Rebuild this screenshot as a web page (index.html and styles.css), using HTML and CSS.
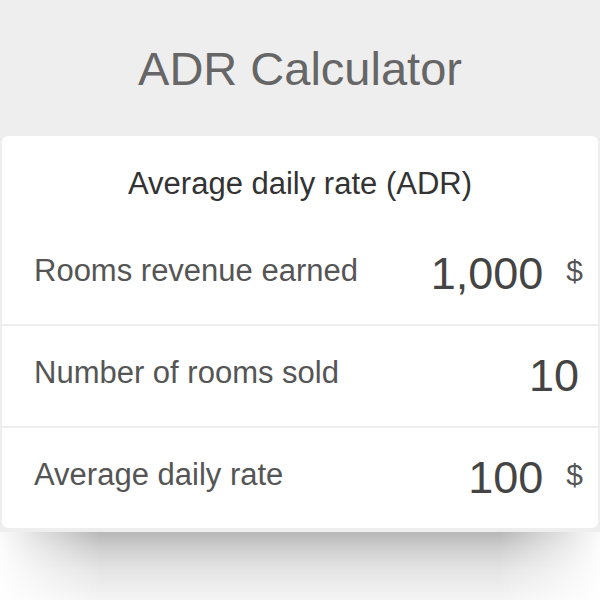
FILE: index.html
```html
<!DOCTYPE html>
<html lang="en">

<head>
    <meta charset="UTF-8" />
    <meta name="viewport" content="width=device-width, initial-scale=1.0" />
    <title>ADR Calculator</title>
    <link rel="stylesheet" href="styles.css">
</head>

<body>
    <div class="calc">
        <header class="calc-head">
            <h1>ADR Calculator</h1>
        </header>
        <div class="card">
            <h2 class="section">Average daily rate (ADR)</h2>
            <div class="row">
                <span class="label">Rooms revenue earned</span>
                <span class="value">1,000</span>
                <span class="unit">$</span>
            </div>
            <div class="row">
                <span class="label">Number of rooms sold</span>
                <span class="value solo">10</span>
            </div>
            <div class="row">
                <span class="label">Average daily rate</span>
                <span class="value">100</span>
                <span class="unit">$</span>
            </div>
        </div>
    </div>
    <div class="calc-shadow"></div>
</body>

</html>
```

FILE: styles.css
```css
/* reset */
* {
    margin: 0;
    padding: 0;
    box-sizing: border-box;
}

body {
    font-family: "Liberation Sans", Arial, Helvetica, sans-serif;
    background: #fff;
}

/* grey frame around the calculator */
.calc {
    background: #eee;
    padding: 0 2px 4px;
}

/* soft shadow under the frame, fading out to the sides */
.calc-shadow {
    height: 68px;
    background: linear-gradient(to bottom,
            rgba(0, 0, 0, 0.28) 0,
            rgba(0, 0, 0, 0.18) 18px,
            rgba(0, 0, 0, 0.10) 38px,
            rgba(0, 0, 0, 0.04) 68px);
    -webkit-mask-image: linear-gradient(to right,
            rgba(0, 0, 0, 0.06) 0,
            rgba(0, 0, 0, 0.5) 45px,
            #000 100px,
            #000 500px,
            rgba(0, 0, 0, 0.5) 555px,
            rgba(0, 0, 0, 0.06) 600px);
    mask-image: linear-gradient(to right,
            rgba(0, 0, 0, 0.06) 0,
            rgba(0, 0, 0, 0.5) 45px,
            #000 100px,
            #000 500px,
            rgba(0, 0, 0, 0.5) 555px,
            rgba(0, 0, 0, 0.06) 600px);
}

.calc-head {
    height: 136px;
    display: flex;
    align-items: center;
    justify-content: center;
}

.calc-head h1 {
    font-size: 47px;
    font-weight: normal;
    color: #666;
}

/* white card with the inputs */
.card {
    background: #fff;
    border-radius: 6px;
}

.section {
    height: 88px;
    padding-top: 7px;
    display: flex;
    align-items: center;
    justify-content: center;
    font-size: 31px;
    font-weight: normal;
    color: #333;
}

.row {
    display: flex;
    align-items: center;
    height: 102px;
    padding: 0 15px 7px 32px;
    border-bottom: 2px solid #eee;
}

.row:last-child {
    height: 100px;
    border-bottom: none;
}

.row .label {
    flex: 1;
    font-size: 31px;
    color: #555;
}

.row .value {
    padding-top: 6px;
    font-size: 45px;
    color: #444;
}

.row .value.solo {
    margin-right: 4px;
}

.row .unit {
    margin-left: 23px;
    font-size: 30px;
    color: #555;
}
```
